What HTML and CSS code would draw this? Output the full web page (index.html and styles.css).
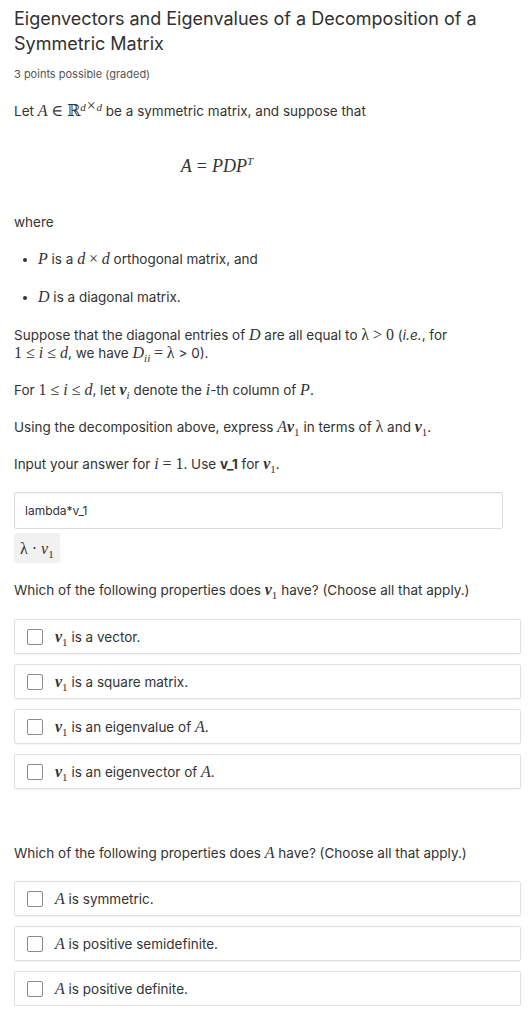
FILE: index.html
```html
<!DOCTYPE html>
<html lang="en">
	<head>
		<meta charset="UTF-8" />
		<meta name="viewport" content="width=device-width, initial-scale=1.0" />
		<title>Eigenvectors and Eigenvalues of a Decomposition of a Symmetric Matrix</title>
		<link rel="stylesheet" href="styles.css">
	</head>
	<body>
		<div class="problem">
			<h2 class="problem-title">Eigenvectors and Eigenvalues of a Decomposition of a Symmetric Matrix</h2>
			<div class="points">3 points possible (graded)</div>

			<p class="text">Let <span class="m">A</span> <span class="mr">∈</span> <span class="mr">ℝ</span><sup class="m">d<span class="mr">×</span>d</sup> be a symmetric matrix, and suppose that</p>

			<div class="display-math">
				<span class="m">A</span> <span class="mr">=</span> <span class="m">PDP</span><sup class="m">T</sup>
			</div>

			<p class="text">where</p>

			<ul class="bullets">
				<li><span class="m">P</span> is a <span class="m">d</span> <span class="mr">×</span> <span class="m">d</span> orthogonal matrix, and</li>
				<li><span class="m">D</span> is a diagonal matrix.</li>
			</ul>

			<p class="text">Suppose that the diagonal entries of <span class="m">D</span> are all equal to <span class="mr">λ &gt; 0</span> (<i>i.e.</i>, for <span class="nowrap"><span class="mr">1 ≤ </span><span class="m">i</span><span class="mr"> ≤ </span><span class="m">d</span></span>, we have <span class="m">D</span><sub class="m">ii</sub> <span class="mr">=</span> <span class="mr">λ</span> &gt; 0).</p>

			<p class="text">For <span class="mr">1 ≤ </span><span class="m">i</span><span class="mr"> ≤ </span><span class="m">d</span>, let <span class="mv">v</span><sub class="m">i</sub> denote the <span class="m">i</span>-th column of <span class="m">P</span>.</p>

			<p class="text">Using the decomposition above, express <span class="m">A</span><span class="mv">v</span><sub class="mr">1</sub> in terms of <span class="mr">λ</span> and <span class="mv">v</span><sub class="mr">1</sub>.</p>

			<p class="text">Input your answer for <span class="m">i</span> <span class="mr">= 1</span>. Use <b>v_1</b> for <span class="mv">v</span><sub class="mr">1</sub>.</p>

			<div class="answer">
				<input class="answer-input" type="text" value="lambda*v_1" />
				<div class="preview"><span class="mr">λ · </span><span class="m">v</span><sub class="mr">1</sub></div>
			</div>

			<p class="text question">Which of the following properties does <span class="mv">v</span><sub class="mr">1</sub> have? (Choose all that apply.)</p>

			<div class="choices">
				<label class="choice"><span class="box"></span><span><span class="mv">v</span><sub class="mr">1</sub> is a vector.</span></label>
				<label class="choice"><span class="box"></span><span><span class="mv">v</span><sub class="mr">1</sub> is a square matrix.</span></label>
				<label class="choice"><span class="box"></span><span><span class="mv">v</span><sub class="mr">1</sub> is an eigenvalue of <span class="m">A</span>.</span></label>
				<label class="choice"><span class="box"></span><span><span class="mv">v</span><sub class="mr">1</sub> is an eigenvector of <span class="m">A</span>.</span></label>
			</div>

			<p class="text question second">Which of the following properties does <span class="m">A</span> have? (Choose all that apply.)</p>

			<div class="choices">
				<label class="choice"><span class="box"></span><span><span class="m">A</span> is symmetric.</span></label>
				<label class="choice"><span class="box"></span><span><span class="m">A</span> is positive semidefinite.</span></label>
				<label class="choice"><span class="box"></span><span><span class="m">A</span> is positive definite.</span></label>
			</div>
		</div>
	</body>
</html>
```

FILE: styles.css
```css
body {
	font-family: Inter, "Noto Sans", sans-serif;
	color: #333;
	background-color: #fff;
	margin: 0;
	padding: 0;
}

.problem {
	padding: 6px 11px 0 14px;
}

.problem-title {
	font-size: 18px;
	font-weight: 400;
	line-height: 25px;
	color: #313131;
	margin: 0;
	width: 480px;
}

.points {
	font-size: 11px;
	color: #555;
	margin-top: 11px;
	margin-bottom: 21px;
}

.text {
	font-size: 13.5px;
	line-height: 18px;
	margin: 0 0 19px 0;
	width: 462px;
}

.nowrap {
	white-space: nowrap;
}

.m,
.mr,
.mv {
	font-family: "Liberation Serif", "DejaVu Serif", serif;
	font-size: 16px;
}

.m {
	font-style: italic;
}

.mv {
	font-style: italic;
	font-weight: bold;
}

sup,
sub {
	font-size: 11px !important;
	line-height: 0;
}

.display-math {
	width: 406px;
	text-align: center;
	margin: 35px 0 36px 0;
	font-size: 18px;
}

.display-math .m,
.display-math .mr {
	font-size: 18px;
}

.bullets {
	font-size: 13.5px;
	margin: 0 0 19px 0;
	padding-left: 24px;
}

.bullets li {
	line-height: 18px;
	margin-bottom: 20px;
}

.answer {
	margin-top: 16px;
	margin-bottom: 18px;
}

.answer-input {
	display: block;
	box-sizing: border-box;
	width: 489px;
	height: 37px;
	padding: 0 10px;
	font-family: Inter, "Noto Sans", sans-serif;
	font-size: 12px;
	color: #333;
	border: 1px solid #dcdcdc;
	border-radius: 2px;
	box-shadow: inset 0 1px 2px rgba(0, 0, 0, 0.06);
	outline: none;
}

.preview {
	display: inline-block;
	margin-top: 4px;
	padding: 5px 6px 4px 6px;
	background-color: #f1f1f1;
	border-radius: 3px;
	line-height: 20px;
}

.question {
	margin-bottom: 20px;
}

.question.second {
	margin-top: 55px;
	margin-bottom: 19px;
}

.choices {
	display: flex;
	flex-direction: column;
	gap: 10px;
}

.choice {
	display: flex;
	align-items: center;
	gap: 12px;
	height: 35px;
	box-sizing: border-box;
	padding-left: 12px;
	border: 1px solid #e0e0e0;
	border-radius: 2px;
	box-shadow: 0 1px 1px rgba(0, 0, 0, 0.05);
	font-size: 13.5px;
}

.box {
	width: 14px;
	height: 14px;
	border: 1px solid #8a8a95;
	border-radius: 2px;
	flex-shrink: 0;
}
```
